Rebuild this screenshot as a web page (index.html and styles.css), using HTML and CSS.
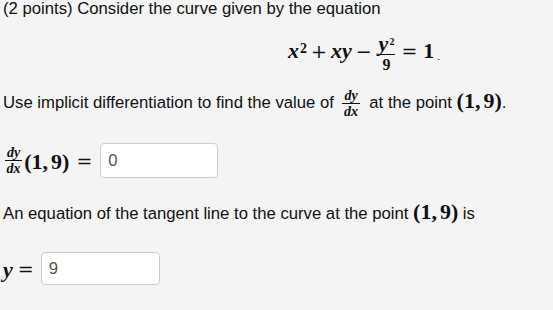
FILE: index.html
```html
<!DOCTYPE html>
<html>
<head>
<meta charset="utf-8">
<link rel="stylesheet" href="styles.css">
</head>
<body>
<div class="page">
  <p class="line first">(2 points) Consider the curve given by the equation</p>
  <div class="display">
    <span class="m">x</span><span class="sup">2</span><span class="op">+</span><span class="m">xy</span><span class="op">−</span><span class="frac dfrac"><span class="num"><span class="m">y</span><span class="sup2">2</span></span><span class="den">9</span></span><span class="op">=</span><span class="mn">1</span><span class="dot">.</span>
  </div>
  <p class="line second">Use implicit differentiation to find the value of <span class="frac ifrac"><span class="num m">dy</span><span class="den m">dx</span></span> at the point <span class="mn big">(1,<span class="th"></span>9)</span>.</p>
  <div class="row r1">
    <span class="frac rfrac"><span class="num m">dy</span><span class="den m">dx</span></span><span class="mn big pt">(1,<span class="th"></span>9)</span><span class="op eq">=</span><span class="box">0</span>
  </div>
  <p class="line third">An equation of the tangent line to the curve at the point <span class="mn big">(1,<span class="th"></span>9)</span> is</p>
  <div class="row r2">
    <span class="m ybig">y</span><span class="op eq2">=</span><span class="box">9</span>
  </div>
</div>
</body>
</html>
```
FILE: styles.css
```css
html, body {
  margin: 0;
  padding: 0;
  background: #f4f4f4;
}
.page {
  width: 553px;
  height: 310px;
  padding-left: 3px;
  box-sizing: border-box;
  font-family: "Liberation Sans", Arial, sans-serif;
  font-size: 16.7px;
  color: #111111;
  overflow: hidden;
}
.line {
  margin: 0;
  white-space: nowrap;
}
.first {
  line-height: 17px;
  height: 17px;
}
.m {
  font-family: "Liberation Serif", "Times New Roman", serif;
  font-style: italic;
  font-weight: bold;
}
.mn {
  font-family: "Liberation Serif", "Times New Roman", serif;
  font-weight: bold;
}
.th {
  display: inline-block;
  width: 3px;
}

/* display equation */
.display {
  display: flex;
  align-items: center;
  height: 40px;
  margin-top: 14px;
  padding-left: 285px;
  font-family: "Liberation Serif", "Times New Roman", serif;
  font-size: 22px;
  line-height: 22px;
}
.display .m {
  font-size: 22px;
}
.sup {
  font-family: "Liberation Serif", serif;
  font-weight: bold;
  font-size: 14px;
  line-height: 14px;
  align-self: flex-start;
  margin-top: 11px;
  margin-left: 1px;
}
.op {
  font-family: "DejaVu Serif", "Liberation Serif", serif;
  font-weight: normal;
  font-size: 19px;
  line-height: 22px;
  margin: 0 4px;
}
.display .mn {
  font-size: 22px;
  margin-left: 2px;
}
.dot {
  font-size: 11px;
  line-height: 11px;
  font-weight: normal;
  align-self: flex-end;
  margin-bottom: 9px;
  margin-left: 3px;
}

/* fractions */
.frac {
  display: inline-flex;
  flex-direction: column;
  align-items: center;
  font-size: 14px;
  line-height: 12px;
}
.frac .num {
  padding: 0 2px 1px;
  border-bottom: 1px solid #111111;
}
.frac .den {
  padding-top: 2px;
}
.dfrac {
  font-family: "Liberation Serif", serif;
  font-weight: bold;
  font-size: 16px;
  line-height: 13px;
  margin: 6px 2px 0 2px;
}
.dfrac .num {
  padding: 0 1px 2px;
}
.dfrac .den {
  padding-top: 3px;
}
.sup2 {
  font-size: 10px;
  vertical-align: 6px;
  line-height: 0;
  margin-left: 1px;
}
.ifrac {
  vertical-align: middle;
  margin: 0 5px 0 4px;
}
.big {
  font-size: 22px;
  line-height: 1;
}

.second {
  margin-top: 16px;
  height: 32px;
  line-height: 32px;
}

.row {
  display: flex;
  align-items: center;
}
.r1 {
  margin-top: 24px;
  height: 35px;
}
.rfrac {
  margin: 0 2px 0 2px;
}
.pt {
  margin-top: 2px;
}
.eq {
  margin: 0 8px 0 7px;
}
.box {
  display: inline-flex;
  align-items: center;
  box-sizing: border-box;
  width: 118px;
  height: 35px;
  background: #ffffff;
  border: 1px solid #cccccc;
  border-radius: 4px;
  padding: 1px 0 0 7px;
  font-family: "Liberation Sans", Arial, sans-serif;
  font-size: 16.7px;
  color: #555555;
}
.third {
  margin-top: 23px;
  height: 26px;
  line-height: 26px;
}
.r2 {
  margin-top: 25px;
  height: 33px;
}
.r2 .box {
  height: 33px;
  width: 119px;
}
.ybig {
  font-size: 22px;
  line-height: 22px;
  margin-top: 2px;
}
.eq2 {
  margin: 0 7px 0 5px;
}
```
